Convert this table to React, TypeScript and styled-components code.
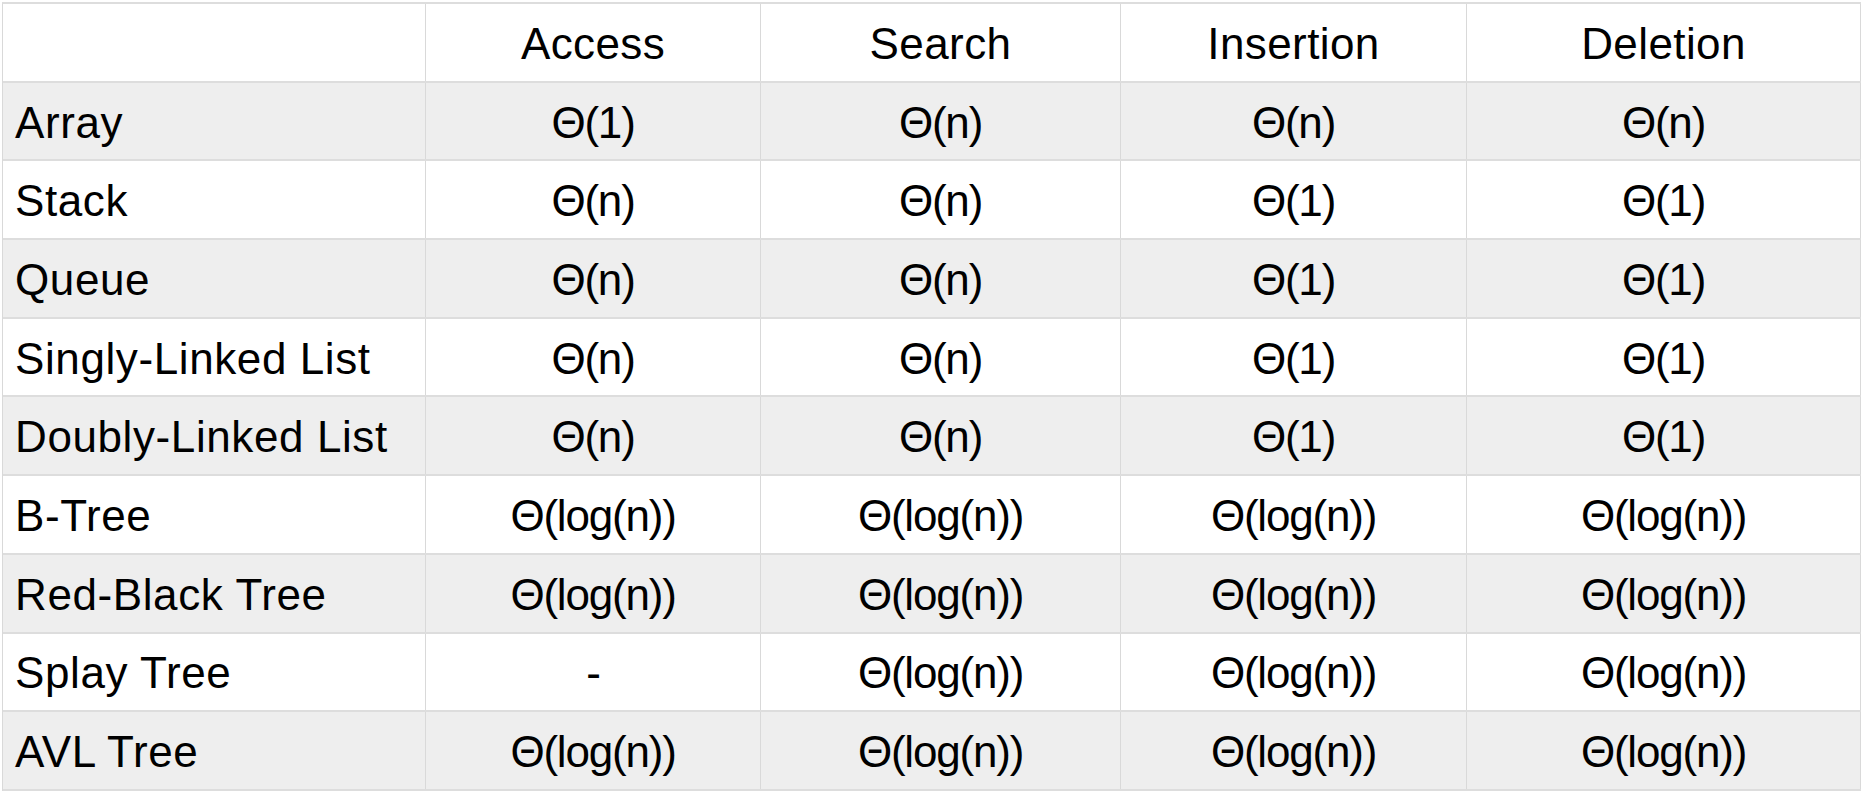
import React from 'react';
import styled, { createGlobalStyle } from 'styled-components';

const GlobalStyle = createGlobalStyle`
  html, body {
    margin: 0;
    padding: 0;
    background: #ffffff;
  }
  body {
    font-family: "Liberation Sans", Arial, Helvetica, sans-serif;
    color: #000000;
  }
`;

const Page = styled.div`
  padding: 2px 0 0 2px;
`;

const Table = styled.div`
  display: flex;
  flex-direction: column;
  width: 1859px;
  border-top: 2px solid #dddddd;
  border-left: 1px solid #d9d9d9;
  box-sizing: border-box;
`;

const Row = styled.div<{ $shaded: boolean }>`
  display: grid;
  grid-template-columns: 423px 335px 360px 346px 394px;
  height: 78.7px;
  box-sizing: border-box;
  background: ${(p) => (p.$shaded ? '#eeeeee' : '#ffffff')};
  border-bottom: 2px solid #dddddd;
`;

type Kind = 'head' | 'label' | 'value';

// Helvetica in the shot: names run a bit wider, the Θ values a bit tighter
const spacing: Record<Kind, string> = {
  head: '0.4px',
  label: '0.6px',
  value: '-1.2px',
};

const Cell = styled.div<{ $kind: Kind }>`
  display: flex;
  align-items: center;
  justify-content: ${(p) => (p.$kind === 'label' ? 'flex-start' : 'center')};
  padding: 3px 0 0 ${(p) => (p.$kind === 'label' ? '12px' : '0')};
  border-right: 1px solid #d9d9d9;
  font-size: 44px;
  line-height: 1;
  letter-spacing: ${(p) => spacing[p.$kind]};
  white-space: nowrap;
  box-sizing: border-box;
`;

const headers = ['', 'Access', 'Search', 'Insertion', 'Deletion'];

const LOG = 'Θ(log(n))';

const rows: string[][] = [
  ['Array', 'Θ(1)', 'Θ(n)', 'Θ(n)', 'Θ(n)'],
  ['Stack', 'Θ(n)', 'Θ(n)', 'Θ(1)', 'Θ(1)'],
  ['Queue', 'Θ(n)', 'Θ(n)', 'Θ(1)', 'Θ(1)'],
  ['Singly-Linked List', 'Θ(n)', 'Θ(n)', 'Θ(1)', 'Θ(1)'],
  ['Doubly-Linked List', 'Θ(n)', 'Θ(n)', 'Θ(1)', 'Θ(1)'],
  ['B-Tree', LOG, LOG, LOG, LOG],
  ['Red-Black Tree', LOG, LOG, LOG, LOG],
  ['Splay Tree', '-', LOG, LOG, LOG],
  ['AVL Tree', LOG, LOG, LOG, LOG],
];

const App: React.FC = () => (
  <>
    <GlobalStyle />
    <Page>
      <Table>
        <Row $shaded={false}>
          {headers.map((h, i) => (
            <Cell key={i} $kind="head">{h}</Cell>
          ))}
        </Row>
        {rows.map((r, ri) => (
          <Row key={r[0]} $shaded={ri % 2 === 0}>
            {r.map((v, ci) => (
              <Cell key={ci} $kind={ci === 0 ? 'label' : 'value'}>
                {v}
              </Cell>
            ))}
          </Row>
        ))}
      </Table>
    </Page>
  </>
);

export default App;
